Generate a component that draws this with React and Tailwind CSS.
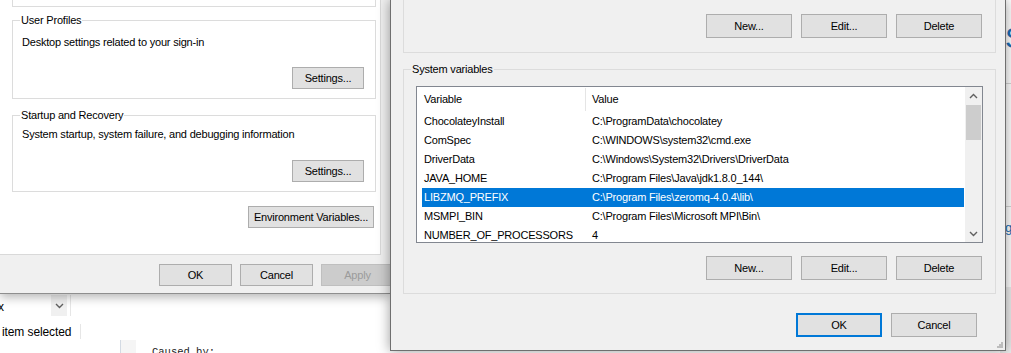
import React from "react";

const Btn = ({ children, className = "", disabled = false }) => (
  <button
    type="button"
    className={`flex shrink-0 items-center justify-center border leading-none ${
      disabled
        ? "bg-[#cccccc] border-[#bfbfbf] text-[#9b9b9b]"
        : "bg-[#e1e1e1] border-[#adadad] text-black"
    } ${className}`}
  >
    {children}
  </button>
);

const Group = ({ label, labelBg, className = "", children }) => (
  <div className={`relative shrink-0 border border-[#dcdcdc] ${className}`}>
    <span className={`absolute left-[7px] top-[-8px] px-[1px] leading-[14px] ${labelBg}`}>{label}</span>
    {children}
  </div>
);

const Chevron = ({ up }) => (
  <svg width="9" height="6" viewBox="0 0 9 6">
    <path
      d={up ? "M1 5 L4.5 1.5 L8 5" : "M1 1 L4.5 4.5 L8 1"}
      fill="none"
      stroke="#606060"
      strokeWidth="1.4"
    />
  </svg>
);

const rows = [
  ["ChocolateyInstall", "C:\\ProgramData\\chocolatey"],
  ["ComSpec", "C:\\WINDOWS\\system32\\cmd.exe"],
  ["DriverData", "C:\\Windows\\System32\\Drivers\\DriverData"],
  ["JAVA_HOME", "C:\\Program Files\\Java\\jdk1.8.0_144\\"],
  ["LIBZMQ_PREFIX", "C:\\Program Files\\zeromq-4.0.4\\lib\\"],
  ["MSMPI_BIN", "C:\\Program Files\\Microsoft MPI\\Bin\\"],
  ["NUMBER_OF_PROCESSORS", "4"],
];

export default function App() {
  return (
    <div className="relative w-[1011px] h-[353px] overflow-hidden bg-white text-black font-['Liberation_Sans',Arial,sans-serif] text-[11px] tracking-[-0.2px]">
      {/* background window, bottom-left */}
      <div className="absolute left-0 top-[293px] w-[400px] h-[60px] bg-white flex flex-col">
        <div className="flex h-[22px] mt-[2px] items-center">
          <span className="w-[53px] ml-[-2px] pt-[3px] text-[12px]">x</span>
          <div className="w-[16px] h-full bg-[#f0f0f0] flex items-center justify-center">
            <Chevron />
          </div>
          <div className="ml-[3px] w-px h-full bg-[#e6e6e6]" />
        </div>
        <div className="flex h-[18px] mt-[6px] items-center">
          <span className="w-[80px] pl-[2px] pt-[2px] text-[12px] tracking-[-0.1px]">item selected</span>
          <div className="w-px h-[15px] bg-[#e6e6e6]" />
        </div>
        <div className="flex flex-1">
          <div className="w-[121px] bg-white border-r border-[#d3dae3]" />
          <div className="w-[15px] bg-[#f5f5f5]" />
          <span className="ml-[16px] pt-[5px] font-['Liberation_Mono',monospace] text-[10.5px] tracking-normal text-[#222]">
            Caused by:
          </span>
        </div>
      </div>

      {/* background window, right edge */}
      <div className="absolute left-[1000px] top-0 w-[11px] h-[353px] bg-white flex flex-col overflow-hidden">
        <span className="mt-[21px] ml-[5px] text-[30px] leading-[34px] text-[#1a6db5] tracking-normal">S</span>
        <div className="mt-[28px] h-px bg-[#d6d6d6]" />
        <div className="mt-[122px] h-px bg-[#d6d6d6]" />
        <span className="mt-[14px] ml-[5px] text-[13px] leading-[14px] text-[#1a6db5]">g</span>
        <div className="mt-[52px] flex-1 bg-[#ececec]" />
      </div>

      {/* System Properties dialog (left) */}
      <div className="absolute left-0 top-0 w-[390px] h-[294px] flex flex-col bg-[#f0f0f0] border-b border-[#8e8e8e] shadow-[0_3px_10px_rgba(0,0,0,0.3)]">
        <div className="h-[255px] w-[381px] shrink-0 bg-white border-r border-b border-[#d9d9d9] flex flex-col">
          <div className="ml-[12px] w-[364px] h-[7px] shrink-0 border-x border-b border-[#dcdcdc]" />
          <Group label="User Profiles" labelBg="bg-white" className="ml-[12px] w-[364px] mt-[13px] h-[79px]">
            <div className="pl-[9px] pt-[14px] leading-[14px]">Desktop settings related to your sign-in</div>
            <Btn className="ml-[279px] mt-[18px] w-[72px] h-[22px]">Settings...</Btn>
          </Group>
          <Group label="Startup and Recovery" labelBg="bg-white" className="ml-[12px] w-[364px] mt-[16px] h-[77px]">
            <div className="pl-[9px] pt-[11px] leading-[14px]">System startup, system failure, and debugging information</div>
            <Btn className="ml-[279px] mt-[19px] w-[72px] h-[22px]">Settings...</Btn>
          </Group>
          <Btn className="ml-[248px] mt-[14px] w-[126px] h-[22px]">Environment Variables...</Btn>
        </div>
        <div className="flex pt-[9px]">
          <Btn className="ml-[159px] w-[73px] h-[22px]">OK</Btn>
          <Btn className="ml-[8px] w-[73px] h-[22px]">Cancel</Btn>
          <Btn disabled className="ml-[8px] w-[73px] h-[22px]">Apply</Btn>
        </div>
      </div>

      {/* Environment Variables dialog (right) */}
      <div className="absolute left-[390px] top-0 w-[616px] h-[351px] flex flex-col bg-[#f0f0f0] border-x border-b border-[#6f6f6f] shadow-[0_0_12px_rgba(0,0,0,0.4)]">
        <div className="ml-[12px] w-[593px] h-[53px] shrink-0 border-x border-b border-[#dcdcdc] flex justify-end gap-[9px] pt-[14px] pr-[13px]">
          <Btn className="w-[86px] h-[24px]">New...</Btn>
          <Btn className="w-[86px] h-[24px]">Edit...</Btn>
          <Btn className="w-[86px] h-[24px]">Delete</Btn>
        </div>

        <Group label="System variables" labelBg="bg-[#f0f0f0]" className="ml-[12px] mt-[16px] w-[593px] pb-[13px]">
          <div className="ml-[12px] mt-[16px] w-[567px] h-[157px] border border-[#828790] bg-white flex">
            <div className="flex-1 overflow-hidden flex flex-col">
              <div className="h-[25px] shrink-0 flex">
                <div className="w-[168px] pl-[7px] flex items-center">Variable</div>
                <div className="w-px mt-[1px] h-[23px] bg-[#e5e5e5]" />
                <div className="pl-[6px] flex items-center">Value</div>
              </div>
              {rows.map(([name, value], i) => (
                <div
                  key={name}
                  className={`ml-[5px] w-[542px] h-[19px] shrink-0 flex items-center ${
                    i === 4 ? "bg-[#0078d7] text-white" : ""
                  }`}
                >
                  <div className="w-[163px] pl-[2px] whitespace-nowrap">{name}</div>
                  <div className="pl-[7px] whitespace-nowrap">{value}</div>
                </div>
              ))}
            </div>
            <div className="w-[17px] bg-[#f0f0f0] flex flex-col items-center">
              <div className="h-[17px] flex items-center justify-center">
                <Chevron up />
              </div>
              <div className="w-[15px] h-[35px] mt-px bg-[#cdcdcd]" />
              <div className="flex-1" />
              <div className="h-[17px] flex items-center justify-center">
                <Chevron />
              </div>
            </div>
          </div>
          <div className="flex justify-end gap-[9px] mt-[13px] pr-[13px]">
            <Btn className="w-[86px] h-[24px]">New...</Btn>
            <Btn className="w-[86px] h-[24px]">Edit...</Btn>
            <Btn className="w-[86px] h-[24px]">Delete</Btn>
          </div>
        </Group>

        <div className="flex mt-[19px]">
          <Btn className="ml-[405px] w-[86px] h-[24px] !border-2 !border-[#0078d7]">OK</Btn>
          <Btn className="ml-[9px] w-[86px] h-[24px]">Cancel</Btn>
        </div>

        <svg className="absolute right-[2px] bottom-[2px]" width="7" height="7" viewBox="0 0 7 7">
          <rect x="5" y="1" width="2" height="2" fill="#bdbdbd" />
          <rect x="3" y="3" width="2" height="2" fill="#bdbdbd" />
          <rect x="5" y="3" width="2" height="2" fill="#bdbdbd" />
          <rect x="1" y="5" width="2" height="2" fill="#bdbdbd" />
          <rect x="3" y="5" width="2" height="2" fill="#bdbdbd" />
          <rect x="5" y="5" width="2" height="2" fill="#bdbdbd" />
        </svg>
      </div>
    </div>
  );
}
